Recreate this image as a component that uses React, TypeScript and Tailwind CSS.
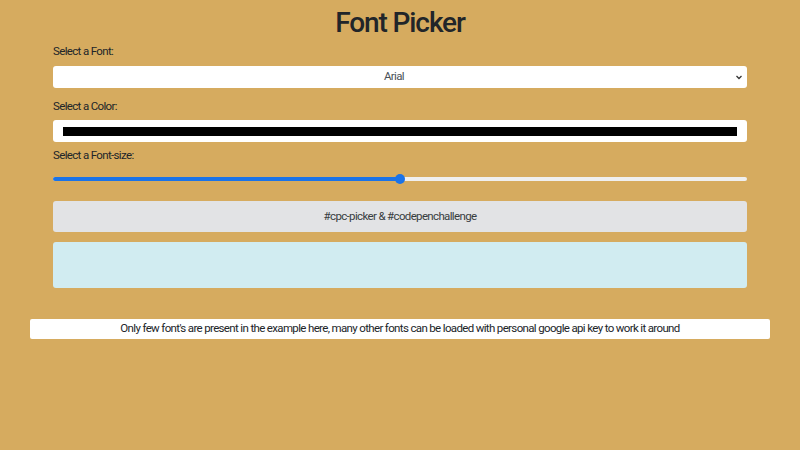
const App = () => {
  return (
    <div className="min-h-[450px] w-full bg-[#d6ab5f] font-['Roboto',sans-serif] text-[#212529]">
      <div className="px-[53px] pt-[6px]">
        <h1 className="text-center text-[28px] font-medium leading-[34px] tracking-[-1.1px]">Font Picker</h1>

        <div className="mt-[4px] text-[11.5px] leading-[14px] tracking-[-0.65px]">Select a Font:</div>
        <div className="mt-[8px] flex h-[22px] items-center rounded-[3px] bg-white pr-[4px]">
          <span className="flex-1 text-center text-[11.5px] tracking-[-0.65px] text-[#495057]">Arial</span>
          <svg width="8" height="8" viewBox="0 0 16 16" className="text-[#333]">
            <path d="M3 6l5 5 5-5" fill="none" stroke="currentColor" strokeWidth="2.5" />
          </svg>
        </div>

        <div className="mt-[11px] text-[11.5px] leading-[14px] tracking-[-0.65px]">Select a Color:</div>
        <div className="mt-[7px] flex h-[22px] items-center rounded-[3px] bg-white px-[10px]">
          <div className="h-[9px] w-full bg-black" />
        </div>

        <div className="mt-[6px] text-[11.5px] leading-[14px] tracking-[-0.65px]">Select a Font-size:</div>
        <div className="relative mt-[12px] h-[10px]">
          <div className="absolute left-0 right-0 top-[3px] h-[4px] rounded-full bg-[#efefef]" />
          <div className="absolute left-0 top-[3px] h-[4px] w-[347px] rounded-full bg-[#1a73e8]" />
          <div className="absolute left-[342px] top-0 h-[10px] w-[10px] rounded-full bg-[#1a73e8]" />
        </div>

        <div className="mt-[17px] flex h-[31px] items-center justify-center rounded-[3px] bg-[#e2e3e5] text-[11.5px] tracking-[-0.65px] text-[#383d41]">
          #cpc-picker &amp; #codepenchallenge
        </div>

        <div className="mt-[10px] h-[46px] rounded-[3px] bg-[#d1ecf1]" />
      </div>

      <div className="mx-[30px] mt-[31px] flex h-[20px] items-center justify-center rounded-[2px] bg-white text-[11.5px] tracking-[-0.65px] text-[#212529]">
        Only few font's are present in the example here, many other fonts can be loaded with personal google api key to work it around
      </div>
    </div>
  )
}

export default App
